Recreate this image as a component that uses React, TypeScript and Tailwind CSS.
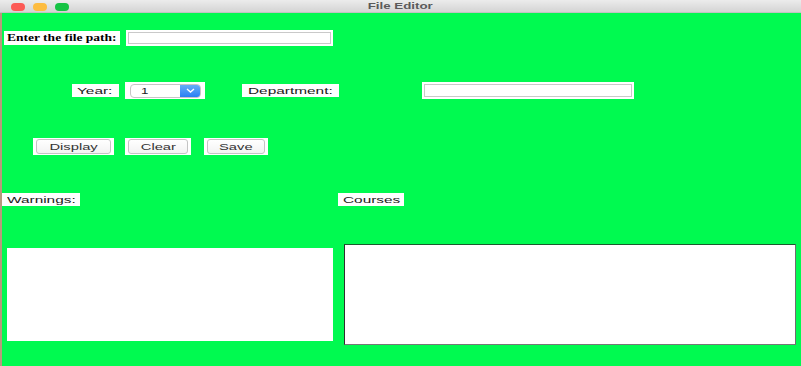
import React from "react";

const sans = { fontFamily: '"Liberation Sans", Arial, sans-serif' };

function Label({ w, pl, children }: { w: string; pl: string; children: React.ReactNode }) {
  return (
    <div className={`bg-white h-[13px] flex items-center ${w} ${pl}`}>
      <span
        className="inline-block origin-left scale-x-[1.62] text-[9.5px] leading-none text-[#1a1a1a]"
        style={sans}
      >
        {children}
      </span>
    </div>
  );
}

function Field({ w }: { w: string }) {
  return (
    <div className={`bg-white h-[17px] p-[2px] ${w}`}>
      <div className="w-full h-full border border-[#c9c9c9] bg-white" />
    </div>
  );
}

function Btn({ w, children }: { w: string; children: React.ReactNode }) {
  return (
    <div className={`bg-white h-[17px] px-[3px] py-[1px] ${w}`}>
      <div className="w-full h-[15px] rounded-[3px] border border-[#c4c4c4] bg-gradient-to-b from-white to-[#f3f3f3] flex items-center justify-center">
        <span
          className="inline-block scale-x-[1.55] text-[9.5px] leading-none text-[#333]"
          style={sans}
        >
          {children}
        </span>
      </div>
    </div>
  );
}

export default function App() {
  return (
    <div className="w-[801px] h-[366px] flex flex-col overflow-hidden">
      {/* title bar */}
      <div className="h-[13px] relative flex items-center justify-center bg-gradient-to-b from-[#ececec] to-[#d4d4d4] border-b border-[#c2c2c2]">
        <div className="absolute left-[11px] top-[3px] flex gap-[8px]">
          <div className="w-[14px] h-[8px] rounded-full bg-[#fc5a55]" />
          <div className="w-[14px] h-[8px] rounded-full bg-[#fdbc40]" />
          <div className="w-[14px] h-[8px] rounded-full bg-[#16c344]" />
        </div>
        <span
          className="inline-block scale-x-[1.4] text-[9.5px] font-bold leading-none text-[#5a5a5a]"
          style={sans}
        >
          File Editor
        </span>
      </div>

      {/* body */}
      <div className="flex-1 bg-[#00fa50] border-l-[2px] border-[#b69a7c] flex flex-col">
        {/* row 1 */}
        <div className="mt-[17px] h-[16px] flex items-center">
          <div className="ml-[2px] w-[116px] h-[14px] bg-white flex items-center pl-[3px]">
            <span
              className="inline-block origin-left scale-x-[1.35] text-[10px] font-bold leading-none text-black"
              style={{ fontFamily: '"Liberation Serif", "Times New Roman", serif' }}
            >
              Enter the file path:
            </span>
          </div>
          <div className="ml-[6px] w-[207px] h-[16px] bg-white p-[2px]">
            <div className="w-full h-full border border-[#c9c9c9]" />
          </div>
        </div>

        {/* row 2 */}
        <div className="mt-[36px] h-[17px] flex items-center">
          <div className="ml-[70px]">
            <Label w="w-[47px]" pl="pl-[5px]">Year:</Label>
          </div>
          <div className="ml-[6px] w-[80px] h-[17px] bg-white flex items-center pl-[5px]">
            <div className="w-[71px] h-[14px] rounded-[4px] border border-[#c6c6c6] flex overflow-hidden">
              <div className="flex-1 flex items-center pl-[11px]">
                <span className="inline-block scale-x-[1.4] text-[9.5px] leading-none text-[#222]" style={sans}>
                  1
                </span>
              </div>
              <div className="w-[20px] h-full bg-gradient-to-b from-[#64adf8] to-[#2a7ef3] flex items-center justify-center">
                <svg width="9" height="5" viewBox="0 0 9 5">
                  <path d="M1 1 L4.5 4 L8 1" stroke="white" strokeWidth="1.4" fill="none" />
                </svg>
              </div>
            </div>
          </div>
          <div className="ml-[37px]">
            <Label w="w-[97px]" pl="pl-[6px]">Department:</Label>
          </div>
          <div className="ml-[83px]">
            <Field w="w-[212px]" />
          </div>
        </div>

        {/* row 3 */}
        <div className="mt-[39px] h-[17px] flex items-center">
          <div className="ml-[31px]">
            <Btn w="w-[81px]">Display</Btn>
          </div>
          <div className="ml-[11px]">
            <Btn w="w-[66px]">Clear</Btn>
          </div>
          <div className="ml-[13px]">
            <Btn w="w-[64px]">Save</Btn>
          </div>
        </div>

        {/* row 4 */}
        <div className="mt-[38px] h-[13px] flex items-center">
          <Label w="w-[78px]" pl="pl-[5px]">Warnings:</Label>
          <div className="ml-[258px]">
            <Label w="w-[66px]" pl="pl-[5px]">Courses</Label>
          </div>
        </div>

        {/* row 5 */}
        <div className="mt-[38px] flex items-start">
          <div className="ml-[5px] mt-[4px] w-[326px] h-[93px] bg-white" />
          <div className="ml-[11px] w-[452px] h-[101px] bg-white border border-t-[#1b5a2e] border-l-[#2e2e2e] border-r-[#6e6e6e] border-b-[#777]" />
        </div>
      </div>
    </div>
  );
}
